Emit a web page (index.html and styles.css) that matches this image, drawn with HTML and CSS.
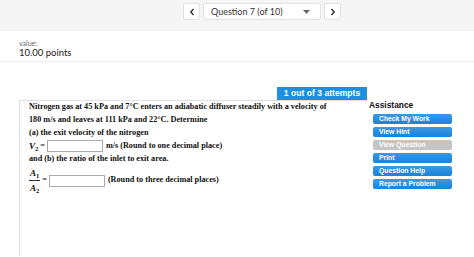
FILE: index.html
```html
<!DOCTYPE html>
<html lang="en">
<head>
    <meta charset="UTF-8">
    <title>Question 7 (of 10)</title>
    <link rel="stylesheet" href="styles.css">
</head>
<body>
    <div class="topbar">
        <div class="qnav">
            <button class="navbtn" aria-label="Previous">
                <svg width="6" height="8" viewBox="0 0 6 8"><path d="M4.5 1 L1.8 4 L4.5 7" fill="none" stroke="#333" stroke-width="1.4"/></svg>
            </button>
            <div class="qselect">
                <span>Question 7 (of 10)</span>
                <svg width="7" height="4" viewBox="0 0 7 4"><path d="M0 0 H7 L3.5 4 Z" fill="#666"/></svg>
            </div>
            <button class="navbtn" aria-label="Next">
                <svg width="6" height="8" viewBox="0 0 6 8"><path d="M1.5 1 L4.2 4 L1.5 7" fill="none" stroke="#333" stroke-width="1.4"/></svg>
            </button>
        </div>
    </div>

    <div class="value">
        <div class="value-label">value:</div>
        <div class="value-points">10.00 points</div>
    </div>

    <div class="attempts">1 out of 3 attempts</div>

    <div class="main">
        <div class="question">
            <p>Nitrogen gas at 45 kPa and 7°C enters an adiabatic diffuser steadily with a velocity of</p>
            <p>180 m/s and leaves at 111 kPa and 22°C. Determine</p>
            <p>(a) the exit velocity of the nitrogen</p>
            <div class="answer">
                <span class="var"><i>V</i><sub>2</sub></span>
                <span class="eq">=</span>
                <input type="text" class="field">
                <span>m/s (Round to one decimal place)</span>
            </div>
            <p>and (b) the ratio of the inlet to exit area.</p>
            <div class="answer frac-row">
                <span class="frac">
                    <span class="num"><i>A</i><sub>1</sub></span>
                    <span class="den"><i>A</i><sub>2</sub></span>
                </span>
                <span class="eq">=</span>
                <input type="text" class="field">
                <span>(Round to three decimal places)</span>
            </div>
        </div>
        <div class="assist">
            <h3>Assistance</h3>
            <button class="abtn">Check My Work</button>
            <button class="abtn">View Hint</button>
            <button class="abtn off">View Question</button>
            <button class="abtn">Print</button>
            <button class="abtn">Question Help</button>
            <button class="abtn">Report a Problem</button>
        </div>
    </div>
</body>
</html>
```

FILE: styles.css
```css
body {
    margin: 0;
    font-family: Lato, "Open Sans", sans-serif;
    background-color: #fff;
    color: #222;
}
.topbar {
    background-color: #f5f5f5;
    height: 31px;
    padding-top: 3px;
    box-sizing: border-box;
}
.qnav {
    display: flex;
    gap: 3px;
    margin-left: 183px;
}
.navbtn {
    width: 17px;
    height: 17px;
    padding: 0;
    background-color: #fff;
    border: 1px solid #e2e2e2;
    border-radius: 2px;
    display: flex;
    align-items: center;
    justify-content: center;
}
.qselect {
    width: 118px;
    height: 17px;
    box-sizing: border-box;
    background-color: #fff;
    border: 1px solid #e2e2e2;
    border-radius: 2px;
    display: flex;
    align-items: center;
    justify-content: space-between;
    padding: 0 10px 0 7px;
    font-size: 9px;
    color: #333;
}
.value {
    padding: 8px 19px 3px;
    border-bottom: 1px solid #eee;
}
.value-label {
    font-size: 7px;
    color: #666;
    line-height: 8px;
}
.value-points {
    font-size: 9.5px;
    line-height: 11px;
    color: #222;
}
.attempts {
    margin: 25px 0 0 277px;
    width: 90px;
    height: 13px;
    background-color: #1c8fe0;
    color: #fff;
    font-family: "Liberation Sans", Arial, sans-serif;
    font-weight: bold;
    font-size: 8.6px;
    line-height: 13px;
    text-align: center;
}
.main {
    display: flex;
    margin-left: 19px;
}
.question {
    width: 348px;
    min-height: 156px;
    box-sizing: border-box;
    border-top: 1px solid #e0e0e0;
    border-left: 1px solid #e0e0e0;
    padding: 0 0 0 9px;
    font-family: "Liberation Serif", "Times New Roman", serif;
    font-weight: bold;
    font-size: 8.2px;
    line-height: 12.9px;
    color: #111;
}
.question p {
    margin: 0;
}
.answer {
    display: flex;
    align-items: center;
    height: 12.9px;
}
.var {
    font-size: 9px;
}
.var sub, .frac sub {
    font-size: 6.5px;
    vertical-align: -2px;
    line-height: 0;
}
.eq {
    margin: 0 2px;
    font-weight: normal;
}
.field {
    width: 56px;
    height: 12px;
    box-sizing: border-box;
    border: 1px solid #aaa;
    padding: 0;
    margin: 0 3px 0 0;
}
.frac-row {
    height: 30px;
}
.frac {
    display: flex;
    flex-direction: column;
    align-items: center;
    font-size: 9px;
    line-height: 14px;
}
.frac .num {
    border-bottom: 1px solid #333;
    padding: 0 1px;
}
.assist {
    padding-left: 2px;
    margin-top: -1px;
}
.assist h3 {
    margin: 0 0 3px;
    font-family: "Liberation Sans", Arial, sans-serif;
    font-size: 8.4px;
    line-height: 12px;
    color: #111;
}
.abtn {
    display: block;
    width: 79px;
    height: 10px;
    margin: 0 0 3px 4px;
    padding: 0 0 0 6px;
    border: none;
    border-radius: 2px;
    background: linear-gradient(#3a9ae8, #1a82d8);
    color: #fff;
    font-family: "Liberation Sans", Arial, sans-serif;
    font-weight: bold;
    font-size: 6.8px;
    line-height: 10px;
    text-align: left;
}
.abtn.off {
    background: #c4c4c4;
}
```
